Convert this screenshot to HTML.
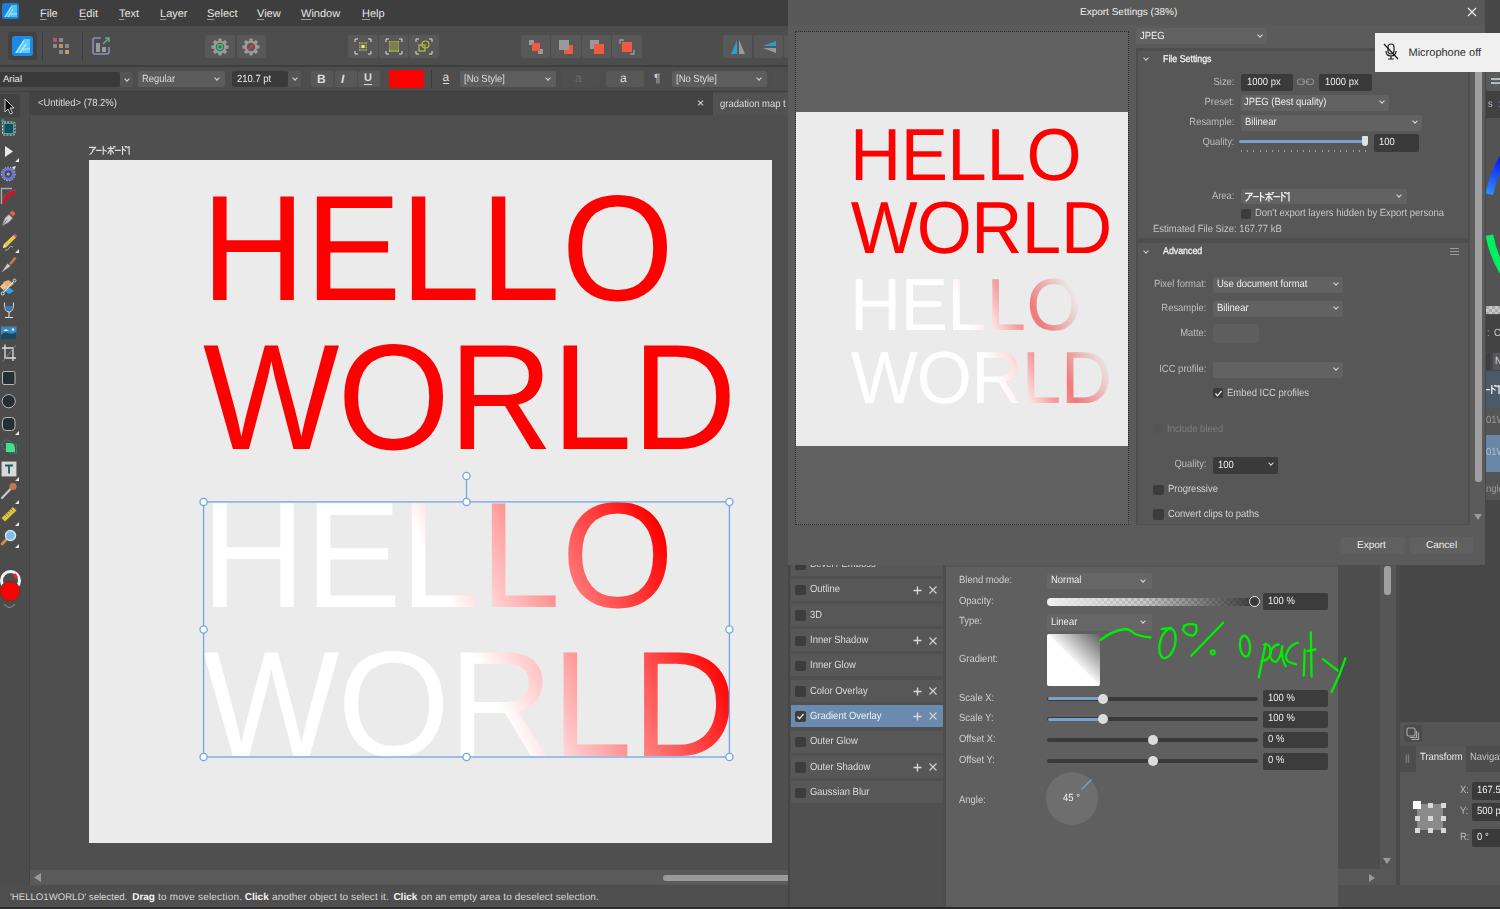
<!DOCTYPE html>
<html><head><meta charset="utf-8">
<style>
*{box-sizing:border-box;margin:0;padding:0}
html,body{width:1500px;height:909px;overflow:hidden;background:#4b4b4b;font-family:"Liberation Sans",sans-serif;color:#e6e6e6;text-rendering:geometricPrecision}
.a{position:absolute}
.t{position:absolute;white-space:nowrap;font-size:10.4px;line-height:10px;color:#e8e8e8;transform:scaleX(0.91);transform-origin:0 50%}
.lb{position:absolute;white-space:nowrap;font-size:10.4px;line-height:10px;color:#bdbdbd;text-align:right;transform:scaleX(0.91);transform-origin:100% 50%}
.m{position:absolute;white-space:nowrap;font-size:11px;line-height:12px;color:#e6e6e6;top:8px}
.m u{text-decoration:underline;text-decoration-color:#9a9a9a;text-underline-offset:1.5px;text-decoration-thickness:1px}
.btn{position:absolute;background:#585858;border-radius:2px}
.fld{position:absolute;background:#3a3a3a;border-radius:2px}
.dd{position:absolute;background:#626262;border-radius:2px}
.chev{position:absolute;width:4px;height:4px;border-right:1px solid #d8d8d8;border-bottom:1px solid #d8d8d8;transform:translate(1px,1px) rotate(45deg)}
.cb{position:absolute;width:11px;height:11px;background:#3c3c3c;border-radius:2px}
.row{position:absolute;left:791px;width:152px;height:22px;background:#575757}
.row .cb{left:4px;top:5px}
.row .t{left:18px;top:6px;color:#dcdcdc}
.pl{position:absolute;left:122px;top:4px;font-size:13px;line-height:13px;color:#d8d8d8}
.xx{position:absolute;left:137px;top:4px;font-size:12px;line-height:13px;color:#d0d0d0}
.tool{position:absolute;left:2px;width:16px;height:16px}
</style></head><body>
<!-- ===== menu bar ===== -->
<div class="a" style="left:0;top:0;width:788px;height:26px;background:#3e3e3e"></div>
<svg class="a" style="left:2px;top:3px" width="18" height="17" viewBox="0 0 18 17">
<rect x="0" y="0" width="17" height="16" rx="3" fill="#1c7fd6"/>
<path d="M2 14 L9.5 2 L15 2 L15 14 Z" fill="#4fc3f7"/>
<path d="M3 14 L9.5 3.5 M6 14 L11 6 M9 11 L15 11" stroke="#bfe9ff" stroke-width="1" fill="none"/>
</svg>
<div class="m" style="left:40px"><u>F</u>ile</div>
<div class="m" style="left:79px"><u>E</u>dit</div>
<div class="m" style="left:119px"><u>T</u>ext</div>
<div class="m" style="left:160px"><u>L</u>ayer</div>
<div class="m" style="left:207px"><u>S</u>elect</div>
<div class="m" style="left:257px"><u>V</u>iew</div>
<div class="m" style="left:301px"><u>W</u>indow</div>
<div class="m" style="left:362px"><u>H</u>elp</div>

<!-- ===== toolbar ===== -->
<div class="a" style="left:0;top:26px;width:788px;height:40px;background:#4d4d4d"></div>
<div class="a" style="left:0;top:65px;width:788px;height:2px;background:#3f3f3f"></div>
<div class="a" style="left:8px;top:32px;width:29px;height:28px;background:#424242;border-radius:3px"></div>
<svg class="a" style="left:12px;top:36px" width="22" height="21" viewBox="0 0 22 21">
<rect x="0" y="0" width="21" height="20" rx="3" fill="#1e88e5"/>
<path d="M3 17 L12 3 L18 3 L18 17 Z" fill="#5ccbf9"/>
<path d="M4 17 L12 4.5 M8 17 L14 8 M11 13 L18 13" stroke="#c8f0ff" stroke-width="1.2" fill="none"/>
</svg>
<div class="a" style="left:42px;top:32px;width:1px;height:29px;background:#3e3e3e"></div>
<div class="a" style="left:82px;top:32px;width:1px;height:29px;background:#3e3e3e"></div>
<svg class="a" style="left:52px;top:36px" width="20" height="20" viewBox="0 0 20 20">
<rect x="1" y="2" width="4" height="4" fill="#a0606a"/><rect x="7" y="2" width="4" height="4" fill="#8a8a8a"/>
<rect x="1" y="8" width="4" height="4" fill="#8a8a8a"/><rect x="7" y="8" width="4" height="4" fill="#c09060"/><rect x="13" y="8" width="4" height="4" fill="#8a8a8a"/>
<rect x="7" y="14" width="4" height="4" fill="#8a8a8a"/><rect x="13" y="14" width="4" height="4" fill="#c0a060"/>
</svg>
<svg class="a" style="left:92px;top:36px" width="20" height="20" viewBox="0 0 20 20">
<path d="M9 2 H3 Q1 2 1 4 V16 Q1 18 3 18 H15 Q17 18 17 16 V11" stroke="#8c8cc8" stroke-width="1.6" fill="none"/>
<rect x="4" y="7" width="4" height="9" fill="#9a9a9a"/><rect x="10" y="11" width="4" height="5" fill="#9a9a9a"/>
<path d="M11 8 L17 2 M13 2 H17 V6" stroke="#5aaa8a" stroke-width="1.6" fill="none"/>
</svg>
<!-- gear buttons -->
<div class="btn" style="left:205px;top:35px;width:30px;height:23px"></div>
<div class="btn" style="left:237px;top:35px;width:29px;height:23px"></div>
<svg class="a" style="left:211px;top:38px" width="18" height="18" viewBox="0 0 18 18">
<g fill="#9c9c9c"><circle cx="9" cy="9" r="6.3"/><rect x="7.3" y="0.5" width="3.4" height="17" rx="1"/><rect x="0.5" y="7.3" width="17" height="3.4" rx="1"/><rect x="7.3" y="0.5" width="3.4" height="17" rx="1" transform="rotate(45 9 9)"/><rect x="7.3" y="0.5" width="3.4" height="17" rx="1" transform="rotate(-45 9 9)"/></g>
<circle cx="9" cy="9" r="4.2" fill="#585858"/><circle cx="9" cy="9" r="3.2" fill="#2ec27e"/><circle cx="9" cy="9" r="1.4" fill="#585858"/>
</svg>
<svg class="a" style="left:242px;top:38px" width="18" height="18" viewBox="0 0 18 18">
<g fill="#9c9c9c"><circle cx="9" cy="9" r="6.3"/><rect x="7.3" y="0.5" width="3.4" height="17" rx="1"/><rect x="0.5" y="7.3" width="17" height="3.4" rx="1"/><rect x="7.3" y="0.5" width="3.4" height="17" rx="1" transform="rotate(45 9 9)"/><rect x="7.3" y="0.5" width="3.4" height="17" rx="1" transform="rotate(-45 9 9)"/></g>
<circle cx="9" cy="9" r="4.2" fill="#585858"/><path d="M6.5 11.5 L11.5 6.5" stroke="#e0304a" stroke-width="1.8"/>
</svg>
<!-- grid buttons -->
<div class="btn" style="left:348px;top:35px;width:30px;height:23px"></div>
<div class="btn" style="left:379px;top:35px;width:29px;height:23px"></div>
<div class="btn" style="left:409px;top:35px;width:30px;height:23px"></div>
<svg class="a" style="left:354px;top:38px" width="18" height="17" viewBox="0 0 18 17">
<path d="M1 4 V1 H4 M14 1 H17 V4 M17 13 V16 H14 M4 16 H1 V13" stroke="#ddd" stroke-width="1" fill="none"/>
<g fill="#9a9a6a"><rect x="5" y="4" width="8" height="9"/></g>
<g stroke="#5a5a5a" stroke-width="0.8"><path d="M7 4V13M9 4V13M11 4V13M5 6.5H13M5 8.5H13M5 10.5H13"/></g>
<rect x="7.5" y="7" width="3" height="3" fill="#e6f05a"/>
</svg>
<svg class="a" style="left:385px;top:38px" width="18" height="17" viewBox="0 0 18 17">
<path d="M1 4 V1 H4 M14 1 H17 V4 M17 13 V16 H14 M4 16 H1 V13" stroke="#ddd" stroke-width="1" fill="none"/>
<rect x="4" y="3" width="10" height="11" fill="#b5c040"/>
<g stroke="#5a5a5a" stroke-width="0.8"><path d="M6 3V14M8 3V14M10 3V14M12 3V14M4 5H14M4 7H14M4 9H14M4 11H14"/></g>
</svg>
<svg class="a" style="left:415px;top:38px" width="18" height="17" viewBox="0 0 18 17">
<path d="M1 4 V1 H4 M14 1 H17 V4 M17 13 V16 H14 M4 16 H1 V13" stroke="#ddd" stroke-width="1" fill="none"/>
<rect x="4" y="7" width="6" height="6" fill="none" stroke="#b5c040" stroke-width="1.2"/><circle cx="10.5" cy="6.5" r="3.5" fill="none" stroke="#b5c040" stroke-width="1.2"/>
</svg>
<!-- arrange buttons -->
<div class="btn" style="left:521px;top:35px;width:29px;height:23px"></div>
<div class="btn" style="left:551px;top:35px;width:30px;height:23px"></div>
<div class="btn" style="left:582px;top:35px;width:29px;height:23px"></div>
<div class="btn" style="left:612px;top:35px;width:30px;height:23px"></div>
<svg class="a" style="left:527px;top:38px" width="18" height="18" viewBox="0 0 18 18">
<rect x="2" y="2" width="5" height="5" fill="#9a9a9a"/><rect x="11" y="11" width="5" height="5" fill="#9a9a9a"/><rect x="5" y="5" width="8" height="8" fill="#f05a40"/>
</svg>
<svg class="a" style="left:557px;top:38px" width="18" height="18" viewBox="0 0 18 18">
<rect x="2" y="2" width="10" height="10" fill="#9a9a9a"/><path d="M12 7 H16 V16 H7 V12 H12 Z" fill="#f05a40"/>
</svg>
<svg class="a" style="left:588px;top:38px" width="18" height="18" viewBox="0 0 18 18">
<path d="M2 2 H11 V6 H6 V11 H2 Z" fill="#9a9a9a"/><rect x="6" y="6" width="10" height="10" fill="#f05a40"/>
</svg>
<svg class="a" style="left:618px;top:38px" width="18" height="18" viewBox="0 0 18 18">
<path d="M2 6 V2 H6 M12 16 H16 V12" stroke="#9a9a9a" stroke-width="1.4" fill="none"/><rect x="4" y="4" width="10" height="10" fill="#f05a40"/>
</svg>
<!-- flip buttons -->
<div class="btn" style="left:723px;top:35px;width:29px;height:23px"></div>
<div class="btn" style="left:754px;top:35px;width:29px;height:23px"></div>
<div class="btn" style="left:784px;top:35px;width:4px;height:23px"></div>
<svg class="a" style="left:729px;top:38px" width="18" height="18" viewBox="0 0 18 18">
<path d="M8 2 L8 16 L2 16 Z" fill="#2a9fd6"/><path d="M10 2 L10 16 L16 16 Z" fill="#9a9a9a"/>
</svg>
<svg class="a" style="left:760px;top:38px" width="18" height="18" viewBox="0 0 18 18">
<path d="M16 3 L16 8 L3 8 Z" fill="#2a9fd6"/><path d="M16 10 L16 15 L3 10 Z" fill="#9a9a9a"/>
</svg>

<!-- ===== context bar ===== -->
<div class="a" style="left:0;top:67px;width:788px;height:24px;background:#4d4d4d"></div>
<div class="a" style="left:0;top:91px;width:788px;height:1px;background:#3f3f3f"></div>
<div class="fld" style="left:0;top:72px;width:120px;height:15px;border-radius:0 2px 2px 0"></div>
<div class="btn" style="left:120px;top:72px;width:13px;height:15px;background:#555"></div>
<div class="chev" style="left:124px;top:76px"></div>
<div class="t" style="left:3px;top:75px;font-size:9.5px;color:#eee;transform:none">Arial</div>
<div class="dd" style="left:138px;top:71px;width:87px;height:16px;background:#5c5c5c"></div>
<div class="t" style="left:142px;top:74.5px;color:#ddd">Regular</div>
<div class="chev" style="left:214px;top:75px"></div>
<div class="fld" style="left:232px;top:71px;width:56px;height:16px"></div>
<div class="btn" style="left:288px;top:71px;width:13px;height:16px;background:#555"></div>
<div class="chev" style="left:292px;top:75px"></div>
<div class="t" style="left:237px;top:74.5px;color:#eee">210.7 pt</div>
<div class="btn" style="left:311px;top:71px;width:22px;height:16px"></div>
<div class="btn" style="left:335px;top:71px;width:22px;height:16px"></div>
<div class="btn" style="left:358px;top:71px;width:22px;height:16px"></div>
<div class="t" style="left:317px;top:73px;font-size:12px;line-height:12px;font-weight:bold;color:#ddd;transform:none">B</div>
<div class="t" style="left:341px;top:73px;font-size:12px;line-height:12px;font-style:italic;font-weight:bold;color:#ddd;transform:none">I</div>
<div class="t" style="left:364px;top:72px;font-size:11px;line-height:12px;font-weight:bold;color:#ddd;border-bottom:1px solid #ddd;transform:none">U</div>
<div class="a" style="left:389px;top:70px;width:35px;height:18px;background:#ff0000;border-radius:2px"></div>
<div class="a" style="left:431px;top:70px;width:1px;height:18px;background:#3a3a3a"></div>
<div class="t" style="left:442.5px;top:71px;font-size:12px;line-height:12px;color:#ddd;border-bottom:1px solid #ddd;transform:none">a</div>
<div class="dd" style="left:460px;top:71px;width:96px;height:16px;background:#5d5d5d"></div>
<div class="t" style="left:464px;top:74.5px;color:#ddd">[No Style]</div>
<div class="chev" style="left:545px;top:75px"></div>
<div class="btn" style="left:562px;top:71px;width:38px;height:16px;background:#4f4f4f"></div>
<div class="t" style="left:575px;top:72px;font-size:12px;line-height:12px;color:#6a6a6a;transform:none">a</div>
<div class="btn" style="left:606px;top:71px;width:38px;height:16px"></div>
<div class="t" style="left:620px;top:71.5px;font-size:12px;line-height:12px;color:#ddd;transform:none">a</div>
<div class="t" style="left:654px;top:72px;font-size:12px;line-height:12px;color:#ccc;transform:none">&#182;</div>
<div class="dd" style="left:672px;top:71px;width:95px;height:16px;background:#5d5d5d"></div>
<div class="t" style="left:676px;top:74.5px;color:#ddd">[No Style]</div>
<div class="chev" style="left:756px;top:75px"></div>
<div class="btn" style="left:773px;top:71px;width:15px;height:16px;background:#4f4f4f"></div>

<!-- ===== left tools ===== -->
<div class="a" style="left:0;top:92px;width:29px;height:793px;background:#4c4c4c"></div>
<div class="a" style="left:29px;top:92px;width:1px;height:793px;background:#444"></div>
<div class="a" style="left:0;top:94px;width:20px;height:23px;background:#434343;border-radius:0 3px 3px 0"></div>
<svg class="a" style="left:0;top:92px" width="29" height="530" viewBox="0 92 29 530">
<!-- 1 move -->
<path d="M5 99 L5 112 L8 109 L10.5 114 L12.5 113 L10 108 L14 108 Z" fill="#111" stroke="#ddd" stroke-width="0.9" stroke-linejoin="round"/>
<!-- 2 artboard -->
<rect x="2.5" y="122" width="12.5" height="13" rx="1.5" fill="none" stroke="#ddd" stroke-width="1" stroke-dasharray="2 1.2"/>
<rect x="4" y="123.5" width="9.5" height="10" fill="#1d4a58" stroke="#2fb5a5" stroke-width="1"/>
<path d="M1 121 H4.5 M2.8 119.3 V122.7" stroke="#2fb5a5" stroke-width="1.2"/>
<!-- 3 node -->
<path d="M5 146 L5 157 L13 151.5 Z" fill="#e8e8e8"/>
<path d="M15 162 L19 158 V162 Z" fill="#e8e8e8"/>
<!-- 4 point transform -->
<circle cx="8.3" cy="174" r="6.8" fill="none" stroke="#ddd" stroke-width="0.9" stroke-dasharray="1.6 1.2"/>
<circle cx="8.3" cy="174" r="5" fill="none" stroke="#6a78f0" stroke-width="2.6"/>
<circle cx="8.3" cy="174" r="1.6" fill="#aaa"/>
<path d="M12 167 L16 166 L14.5 170 Z" fill="#ddd"/>
<!-- 5 corner -->
<path d="M1.5 204 V188.5 H12" fill="none" stroke="#aaa" stroke-width="1.4"/>
<path d="M2 204 Q2 191 16 190 V194 Q6 195 5.5 204 Z" fill="#707070"/>
<path d="M2 204 Q3 191 16 190.5 V194.5 Q7 195.5 5.5 204 Z" fill="#b52030"/>
<!-- 6 pen -->
<path d="M2 226 L5 218 L9 214.5 L12.5 218 L9 222 Z" fill="#d0d0d0" stroke="#888" stroke-width="0.6"/>
<path d="M2 226 L7 219.5" stroke="#555" stroke-width="0.8"/>
<path d="M9.5 213 L12.5 210.5 L15.5 213.5 L13 216.5 Z" fill="#f05a3a"/>
<!-- 7 pencil -->
<path d="M3 248 L4 244 L13.5 235 L16 237.5 L6.5 247 Z" fill="#e6c84a"/>
<path d="M3 248 L4 244 L6.5 247 Z" fill="#f0e0b0"/>
<path d="M13.5 235 L15 233.7 L17.3 236 L16 237.5 Z" fill="#e040c0"/>
<path d="M5 250 Q8 251 9 248 Q10 245 13 247" fill="none" stroke="#ccc" stroke-width="0.7"/>
<path d="M15 253 L19 249 V253 Z" fill="#e8e8e8"/>
<!-- 8 vector brush -->
<path d="M9 263.5 L14 257.5 Q16 256.5 16.5 258.5 L11 265 Z" fill="#c87848"/>
<path d="M1.5 272.5 L7.5 263.5 L10.5 266 Z" fill="#c8c8c8"/>
<!-- 9 fill -->
<rect x="2.5" y="281" width="6" height="6.5" fill="#f0c080" transform="rotate(-45 8 287)"/>
<path d="M3 282 L8.5 280 L14 284 L8 288 Z" fill="#e8b070"/>
<path d="M3 290 L8.5 287 L14 291 L9 294 Z" fill="#3aa0e0"/>
<path d="M2.5 293.5 L14.5 280.5" stroke="#e8e8e8" stroke-width="1.1"/>
<circle cx="2.7" cy="293.5" r="1.5" fill="#555" stroke="#eee" stroke-width="0.8"/>
<circle cx="14.5" cy="280.5" r="1.5" fill="#555" stroke="#eee" stroke-width="0.8"/>
<!-- 10 transparency -->
<path d="M4.5 302.5 Q4 312 9 312 Q14 312 13.5 302.5" fill="none" stroke="#ddd" stroke-width="1"/>
<path d="M5 306 Q5.5 311 9 311 Q12.5 311 13 306 Z" fill="#3a7ab8"/>
<path d="M9 312 V317 M5 317.5 H13" stroke="#ddd" stroke-width="1.1"/>
<!-- 11 place image -->
<rect x="1" y="326.5" width="15.5" height="12.5" fill="#3a88b8"/>
<path d="M1 335 Q5 331 8 333 Q12 335 16.5 332 V339 H1 Z" fill="#174868"/>
<path d="M3 331 L6 329 L9 331 Z" fill="#dfeef8"/>
<circle cx="13" cy="329.5" r="1.2" fill="#dfeef8"/>
<!-- 12 crop -->
<path d="M5 344.5 V358 H16 M2 348 H13 V361" fill="none" stroke="#ddd" stroke-width="1.3"/>
<path d="M2.5 362 L16 345" stroke="#888" stroke-width="0.8"/>
<!-- 13 rect -->
<rect x="2.5" y="371.5" width="12.5" height="13" rx="1.5" fill="#263034" stroke="#b8b8b8" stroke-width="1"/>
<!-- 14 ellipse -->
<circle cx="8.7" cy="401.2" r="6.6" fill="#263034" stroke="#b8b8b8" stroke-width="1"/>
<!-- 15 rounded rect -->
<rect x="2.5" y="417.5" width="12.5" height="13" rx="3.5" fill="#263034" stroke="#b8b8b8" stroke-width="1"/>
<path d="M15 435 L19 431 V435 Z" fill="#e8e8e8"/>
<!-- 16 shape -->
<circle cx="7" cy="445" r="5" fill="none" stroke="#2f9aa8" stroke-width="1" stroke-dasharray="1.2 1"/>
<rect x="9" y="444" width="7.5" height="9" fill="none" stroke="#2f9aa8" stroke-width="1" stroke-dasharray="1.2 1"/>
<path d="M6 443 H10 Q15 443 15 449 V452 H6 Z" fill="#44e088"/>
<!-- 17 text -->
<rect x="1.5" y="461.5" width="15" height="15" rx="1" fill="#d8d8d8" stroke="#888" stroke-width="1"/>
<path d="M5 465.5 H13 M9 465.5 V473.5" stroke="#1f5868" stroke-width="1.8"/>
<path d="M15 481 L19 477 V481 Z" fill="#e8e8e8"/>
<!-- 18 color picker -->
<path d="M2 498 L10 489.5" stroke="#c8c8c8" stroke-width="2.2" stroke-linecap="round"/>
<circle cx="13" cy="486.5" r="3.6" fill="#c87850"/>
<path d="M15 504 L19 500 V504 Z" fill="#e8e8e8"/>
<!-- 19 ruler -->
<path d="M1.5 518 L13 507 L16.5 510.5 L5 521.5 Z" fill="#e0c040"/>
<path d="M5 515 l1.3 1.3 M7 513 l1.8 1.8 M9 511 l1.3 1.3 M11 509 l1.8 1.8" stroke="#6a5a20" stroke-width="0.7"/>
<path d="M15 526 L19 522 V526 Z" fill="#e8e8e8"/>
<!-- 20 zoom -->
<path d="M2 544 L6.5 539.5" stroke="#d89050" stroke-width="2.6" stroke-linecap="round"/>
<circle cx="10.5" cy="535.5" r="5" fill="#78c0f0" stroke="#e0e0e0" stroke-width="1.5"/>
<path d="M15 548 L19 544 V548 Z" fill="#e8e8e8"/>
<!-- 21 colour -->
<circle cx="10.5" cy="580.5" r="9" fill="none" stroke="#f2f2f2" stroke-width="3"/>
<path d="M14.2 574 L16.6 577.8" stroke="#ff2020" stroke-width="3.2"/>
<circle cx="10" cy="591.3" r="10" fill="#ff0000" stroke="#444" stroke-width="1"/>
<path d="M5 605 Q9.5 610 14 605 M4 605.5 L5.5 604 M15 605.5 L13.5 604" fill="none" stroke="#999" stroke-width="0.9"/>
</svg>


<!-- ===== tab bar + canvas ===== -->
<div class="a" style="left:30px;top:92px;width:683px;height:24px;background:#434343"></div>
<div class="t" style="left:38px;top:99px;color:#ddd">&lt;Untitled&gt; (78.2%)</div>
<div class="t" style="left:697px;top:97px;font-size:12px;line-height:12px;color:#ddd;transform:none">&#215;</div>
<div class="a" style="left:713px;top:93px;width:75px;height:22px;background:#525252"></div>
<div class="t" style="left:720px;top:99.5px;color:#ddd">gradation map t</div>
<div class="a" style="left:30px;top:115px;width:758px;height:755px;background:#4f4f4f"></div>
<div class="a" style="left:30px;top:870px;width:758px;height:15px;background:#5a5a5a"></div>
<svg class="a" style="left:34px;top:873px" width="8" height="9"><path d="M7 0 L0 4.5 L7 9 Z" fill="#9a9a9a"/></svg>
<div class="a" style="left:663px;top:875px;width:125px;height:6px;background:#9a9a9a;border-radius:3px 0 0 3px"></div>
<!-- status -->
<div class="a" style="left:0;top:885px;width:1500px;height:22px;background:#4e4e4e"></div>
<div class="a" style="left:0;top:907px;width:1500px;height:2px;background:#2c2c2c"></div>
<div class="t" style="left:10px;top:893px;font-size:9.6px;color:#d8d8d8;transform:none">'HELLO1WORLD' selected.</div>
<div class="t" style="left:132.2px;top:893px;font-size:10px;color:#f4f4f4;font-weight:bold;transform:none">Drag</div>
<div class="t" style="left:158px;top:893px;font-size:10px;color:#d8d8d8;letter-spacing:0.2px;transform:none">to move selection.</div>
<div class="t" style="left:244.8px;top:893px;font-size:10px;color:#f4f4f4;font-weight:bold;transform:none">Click</div>
<div class="t" style="left:272px;top:893px;font-size:10px;color:#d8d8d8;letter-spacing:0.1px;transform:none">another object to select it.</div>
<div class="t" style="left:393.4px;top:893px;font-size:10px;color:#f4f4f4;font-weight:bold;transform:none">Click</div>
<div class="t" style="left:421px;top:893px;font-size:10px;color:#d8d8d8;letter-spacing:0.1px;transform:none">on an empty area to deselect selection.</div>

<!-- artboard -->
<svg width="0" height="0" style="position:absolute"><defs><symbol id="kata" viewBox="0 0 45 9.5" overflow="visible"><g fill="none" stroke="currentColor" stroke-width="1.25" stroke-linecap="round">
<path d="M0.3 1.3 H7.2 Q6.6 3.4 4.6 4.3 M4.6 3 Q4.4 6.8 1 9"/>
<path d="M8.2 4.6 H13.4"/>
<path d="M15.6 0 V9.2 M16 3.8 L19 5.6"/>
<path d="M20.6 2.4 H27.2 M23.9 0 V9.2 M22.8 4.6 L20.8 8 M25 4.6 L27 7.6 M27 0 l0.5 1 M28.2 -0.2 l0.5 1"/>
<path d="M28.8 4.6 H34.6"/>
<path d="M36.8 0 V9.2 M37.2 3 L40.2 5 M39.6 0.2 l0.5 1 M40.8 0 l0.5 1"/>
<path d="M42.3 1.8 L44 0.5 V9"/>
</g></symbol></defs></svg>
<svg class="a" style="left:89px;top:146px;color:#dedede" width="41" height="9" viewBox="0 0 45 9.5"><use href="#kata"/></svg>
<div class="a" style="left:89px;top:160px;width:683px;height:683px;background:#ebebeb"></div>
<svg class="a" style="left:0;top:0" width="788" height="909" viewBox="0 0 788 909">
<defs><linearGradient id="g1" gradientUnits="userSpaceOnUse" x1="462.9" y1="629.5" x2="661.8" y2="532.8"><stop offset="0" stop-color="#fff"/><stop offset="1" stop-color="#f00"/></linearGradient>
<mask id="m1" maskUnits="userSpaceOnUse" x="0" y="0" width="788" height="909"><g font-family="Liberation Sans" font-size="144.5" fill="#fff">
<text transform="translate(0,606.6) scale(1,1.0412)" x="201.25 305.05 399.95 479.95 561.56" y="0">HELLO</text>
<text transform="translate(0,755.7) scale(1,1.0412)" x="202.96 337.46 448.65 551.75 632.15" y="0">WORLD</text>
</g></mask></defs>
<g font-family="Liberation Sans" font-size="144.5">
<text transform="translate(0,300) scale(1,1.0412)" x="201.25 305.05 399.95 479.95 561.56" y="0" fill="#f00">HELLO</text>
<text transform="translate(0,448.6) scale(1,1.0412)" x="202.96 337.46 448.65 551.75 632.15" y="0" fill="#f00">WORLD</text>
</g>
<rect x="180" y="480" width="580" height="300" fill="url(#g1)" mask="url(#m1)"/>
<g stroke="#70a6e8" stroke-width="1.3" fill="none">
<rect x="203.6" y="501.9" width="525.8" height="255.1"/>
<line x1="466.5" y1="476" x2="466.5" y2="501.9"/>
</g>
<g stroke="#70a6e8" stroke-width="1.3" fill="#fff">
<circle cx="203.6" cy="501.9" r="3.6"/><circle cx="466.5" cy="501.9" r="3.6"/><circle cx="729.4" cy="501.9" r="3.6"/>
<circle cx="203.6" cy="629.5" r="3.6"/><circle cx="729.4" cy="629.5" r="3.6"/>
<circle cx="203.6" cy="757" r="3.6"/><circle cx="466.5" cy="757" r="3.6"/><circle cx="729.4" cy="757" r="3.6"/>
<circle cx="466.5" cy="476" r="3.6"/>
</g>
</svg>

<!-- ===== EFFECTS ===== -->
<div class="a" style="left:788px;top:565px;width:712px;height:342px;background:#505050"></div>
<div class="a" style="left:788px;top:565px;width:1.5px;height:342px;background:#464646"></div>
<div class="row" style="top:553.5px;background:#575757">
<div class="cb" style="top:6.3px;width:10.5px;height:10.5px"></div>
<div class="t" style="left:18.5px;top:6.8px;color:#dcdcdc">Bevel / Emboss</div>


</div>
<div class="row" style="top:578.6px;background:#575757">
<div class="cb" style="top:6.3px;width:10.5px;height:10.5px"></div>
<div class="t" style="left:18.5px;top:6.8px;color:#dcdcdc">Outline</div>
<svg class="a" style="left:121.5px;top:7px" width="9" height="9"><path d="M4.5 0.5V8.5M0.5 4.5H8.5" stroke="#d8d8d8" stroke-width="1.4"/></svg>
<svg class="a" style="left:137.5px;top:7.3px" width="8" height="8"><path d="M0.5 0.5L7.5 7.5M7.5 0.5L0.5 7.5" stroke="#d0d0d0" stroke-width="1.2"/></svg>
</div>
<div class="row" style="top:603.9px;background:#575757">
<div class="cb" style="top:6.3px;width:10.5px;height:10.5px"></div>
<div class="t" style="left:18.5px;top:6.8px;color:#dcdcdc">3D</div>
</div>
<div class="row" style="top:629.3px;background:#575757">
<div class="cb" style="top:6.3px;width:10.5px;height:10.5px"></div>
<div class="t" style="left:18.5px;top:6.8px;color:#dcdcdc">Inner Shadow</div>
<svg class="a" style="left:121.5px;top:7px" width="9" height="9"><path d="M4.5 0.5V8.5M0.5 4.5H8.5" stroke="#d8d8d8" stroke-width="1.4"/></svg>
<svg class="a" style="left:137.5px;top:7.3px" width="8" height="8"><path d="M0.5 0.5L7.5 7.5M7.5 0.5L0.5 7.5" stroke="#d0d0d0" stroke-width="1.2"/></svg>
</div>
<div class="row" style="top:654.4px;background:#575757">
<div class="cb" style="top:6.3px;width:10.5px;height:10.5px"></div>
<div class="t" style="left:18.5px;top:6.8px;color:#dcdcdc">Inner Glow</div>
</div>
<div class="row" style="top:679.8px;background:#575757">
<div class="cb" style="top:6.3px;width:10.5px;height:10.5px"></div>
<div class="t" style="left:18.5px;top:6.8px;color:#dcdcdc">Color Overlay</div>
<svg class="a" style="left:121.5px;top:7px" width="9" height="9"><path d="M4.5 0.5V8.5M0.5 4.5H8.5" stroke="#d8d8d8" stroke-width="1.4"/></svg>
<svg class="a" style="left:137.5px;top:7.3px" width="8" height="8"><path d="M0.5 0.5L7.5 7.5M7.5 0.5L0.5 7.5" stroke="#d0d0d0" stroke-width="1.2"/></svg>
</div>
<div class="row" style="top:705.2px;background:#6a8bad">
<div class="cb" style="top:6.3px;width:10.5px;height:10.5px"></div>
<svg class="a" style="left:5px;top:6.5px" width="9" height="9"><path d="M1.5 4.5 L3.5 6.8 L7.5 2" stroke="#eee" stroke-width="1.3" fill="none"/></svg>
<div class="t" style="left:18.5px;top:6.8px;color:#eef2f6">Gradient Overlay</div>
<svg class="a" style="left:121.5px;top:7px" width="9" height="9"><path d="M4.5 0.5V8.5M0.5 4.5H8.5" stroke="#d8d8d8" stroke-width="1.4"/></svg>
<svg class="a" style="left:137.5px;top:7.3px" width="8" height="8"><path d="M0.5 0.5L7.5 7.5M7.5 0.5L0.5 7.5" stroke="#d0d0d0" stroke-width="1.2"/></svg>
</div>
<div class="row" style="top:730.6px;background:#575757">
<div class="cb" style="top:6.3px;width:10.5px;height:10.5px"></div>
<div class="t" style="left:18.5px;top:6.8px;color:#dcdcdc">Outer Glow</div>
</div>
<div class="row" style="top:756px;background:#575757">
<div class="cb" style="top:6.3px;width:10.5px;height:10.5px"></div>
<div class="t" style="left:18.5px;top:6.8px;color:#dcdcdc">Outer Shadow</div>
<svg class="a" style="left:121.5px;top:7px" width="9" height="9"><path d="M4.5 0.5V8.5M0.5 4.5H8.5" stroke="#d8d8d8" stroke-width="1.4"/></svg>
<svg class="a" style="left:137.5px;top:7.3px" width="8" height="8"><path d="M0.5 0.5L7.5 7.5M7.5 0.5L0.5 7.5" stroke="#d0d0d0" stroke-width="1.2"/></svg>
</div>
<div class="row" style="top:781.4px;background:#575757">
<div class="cb" style="top:6.3px;width:10.5px;height:10.5px"></div>
<div class="t" style="left:18.5px;top:6.8px;color:#dcdcdc">Gaussian Blur</div>
</div>
<div class="a" style="left:943px;top:565px;width:3px;height:342px;background:#4d4d4d"></div>
<div class="a" style="left:946px;top:565px;width:392px;height:342px;background:#5f5f5f"></div>
<div class="a" style="left:946px;top:565px;width:392px;height:2px;background:#555"></div>
<div class="t" style="left:959px;top:576px;color:#cfcfcf">Blend mode:</div>
<div class="t" style="left:959px;top:596.5px;color:#cfcfcf">Opacity:</div>
<div class="t" style="left:959px;top:617px;color:#cfcfcf">Type:</div>
<div class="t" style="left:959px;top:654.5px;color:#cfcfcf">Gradient:</div>
<div class="t" style="left:959px;top:693.5px;color:#cfcfcf">Scale X:</div>
<div class="t" style="left:959px;top:714.4px;color:#cfcfcf">Scale Y:</div>
<div class="t" style="left:959px;top:735px;color:#cfcfcf">Offset X:</div>
<div class="t" style="left:959px;top:756.3px;color:#cfcfcf">Offset Y:</div>
<div class="t" style="left:959px;top:795.5px;color:#cfcfcf">Angle:</div>
<div class="dd" style="left:1047px;top:573px;width:105px;height:16px;background:#666"></div>
<div class="t" style="left:1051px;top:576px;color:#eee">Normal</div>
<div class="chev" style="left:1140px;top:576.5px"></div>
<div class="a" style="left:1047px;top:597.5px;width:212px;height:8.5px;border-radius:4px;background:linear-gradient(90deg,rgba(240,240,240,1) 0%,rgba(200,200,200,0.6) 45%,rgba(40,40,40,0.9) 100%),repeating-conic-gradient(#cfcfcf 0 25%,#8a8a8a 0 50%) 0 0/6px 6px"></div>
<div class="a" style="left:1248.5px;top:596px;width:11px;height:11px;border-radius:50%;background:#3a3a3a;border:1.5px solid #e8e8e8"></div>
<div class="fld" style="left:1262.5px;top:593px;width:65.5px;height:16.5px;background:#3c3c3c"></div>
<div class="t" style="left:1268px;top:596.5px;color:#eee">100 %</div>
<div class="dd" style="left:1047px;top:614px;width:105px;height:16.5px;background:#666"></div>
<div class="t" style="left:1051px;top:617.5px;color:#eee">Linear</div>
<div class="chev" style="left:1140px;top:617.5px"></div>
<div class="a" style="left:1047px;top:634px;width:52.5px;height:51.5px;border-radius:2px;background:linear-gradient(45deg,#fff 50%,#f0f0f0 52%,#606060 100%)"></div>
<div class="a" style="left:1047px;top:696.5px;width:211px;height:4px;background:#3a3a3a;border-radius:2px"></div>
<div class="a" style="left:1048px;top:697.0px;width:54px;height:3px;background:#7aa0cc;border-radius:2px"></div>
<div class="a" style="left:1097.5px;top:693.5px;width:10px;height:10px;background:#dcdcdc;border-radius:50%"></div>
<div class="a" style="left:1047px;top:717.4px;width:211px;height:4px;background:#3a3a3a;border-radius:2px"></div>
<div class="a" style="left:1048px;top:717.9px;width:54px;height:3px;background:#7aa0cc;border-radius:2px"></div>
<div class="a" style="left:1097.5px;top:714.4px;width:10px;height:10px;background:#dcdcdc;border-radius:50%"></div>
<div class="a" style="left:1047px;top:738px;width:211px;height:4px;background:#3a3a3a;border-radius:2px"></div>
<div class="a" style="left:1147.5px;top:735px;width:10px;height:10px;background:#dcdcdc;border-radius:50%"></div>
<div class="a" style="left:1047px;top:759.3px;width:211px;height:4px;background:#3a3a3a;border-radius:2px"></div>
<div class="a" style="left:1147.5px;top:756.3px;width:10px;height:10px;background:#dcdcdc;border-radius:50%"></div>
<div class="fld" style="left:1262.5px;top:690.2px;width:65.5px;height:16.5px;background:#3c3c3c"></div>
<div class="t" style="left:1268px;top:693.5px;color:#eee">100 %</div>
<div class="fld" style="left:1262.5px;top:711.1px;width:65.5px;height:16.5px;background:#3c3c3c"></div>
<div class="t" style="left:1268px;top:714.4px;color:#eee">100 %</div>
<div class="fld" style="left:1262.5px;top:731.7px;width:65.5px;height:16.5px;background:#3c3c3c"></div>
<div class="t" style="left:1268px;top:735px;color:#eee">0 %</div>
<div class="fld" style="left:1262.5px;top:753.0px;width:65.5px;height:16.5px;background:#3c3c3c"></div>
<div class="t" style="left:1268px;top:756.3px;color:#eee">0 %</div>
<div class="a" style="left:1045.5px;top:772px;width:52.5px;height:52.5px;border-radius:50%;background:#6e6e6e"></div>
<svg class="a" style="left:1078px;top:777px" width="16" height="16"><path d="M3.5 12.5 L13.5 2.5" stroke="#7aa0cc" stroke-width="1.2"/></svg>
<div class="t" style="left:1063px;top:793.5px;color:#f0f0f0">45 °</div>

<div class="a" style="left:1338px;top:565px;width:42px;height:304px;background:#4d4d4d"></div>
<div class="a" style="left:1380px;top:565px;width:16px;height:304px;background:#565656"></div>
<div class="a" style="left:1383.5px;top:566px;width:7px;height:28.5px;background:#a0a0a0;border-radius:3px"></div>
<svg class="a" style="left:1383px;top:858px" width="8" height="6"><path d="M0 0H8L4 6Z" fill="#9a9a9a"/></svg>
<div class="a" style="left:1338px;top:869px;width:58px;height:16px;background:#575757"></div>
<svg class="a" style="left:1369px;top:874px" width="6" height="8"><path d="M0 0V8L6 4Z" fill="#9a9a9a"/></svg>
<div class="a" style="left:1338px;top:885px;width:162px;height:22px;background:#505050"></div>
<div class="a" style="left:1396px;top:565px;width:4px;height:320px;background:#4a4a4a"></div>
<div class="a" style="left:1400px;top:565px;width:100px;height:157px;background:#474747"></div>
<div class="a" style="left:1400px;top:722px;width:100px;height:24px;background:#555"></div>
<div class="a" style="left:1404px;top:725px;width:18px;height:17px;background:#4b4b4b;border-radius:2px"></div>
<svg class="a" style="left:1406px;top:727px" width="14" height="14"><rect x="1" y="1" width="8" height="8" rx="1.5" fill="none" stroke="#aaa" stroke-width="1.1"/><path d="M4 10.5 H10.5 V4 M5.5 12.5 H12.5 V5.5" stroke="#aaa" stroke-width="1.1" fill="none"/></svg>
<div class="a" style="left:1400px;top:746px;width:100px;height:26px;background:#4d4d4d"></div>
<div class="t" style="left:1405px;top:753px;color:#999;font-size:9px;transform:none">||</div>
<div class="a" style="left:1416px;top:746px;width:50px;height:26px;background:#575757"></div>
<div class="t" style="left:1419.5px;top:752.5px;color:#eaeaea">Transform</div>
<div class="t" style="left:1470px;top:752.5px;color:#c4c4c4">Navigator</div>
<div class="a" style="left:1400px;top:772px;width:100px;height:113px;background:#575757"></div>
<div class="a" style="left:1417px;top:804px;width:26px;height:26px;background:#8a8a8a"></div>
<div class="a" style="left:1427.5px;top:802.5px;width:5px;height:5px;background:#d8d8d8"></div>
<div class="a" style="left:1440.5px;top:802.5px;width:5px;height:5px;background:#d8d8d8"></div>
<div class="a" style="left:1414.5px;top:815.5px;width:5px;height:5px;background:#d8d8d8"></div>
<div class="a" style="left:1427.5px;top:815.5px;width:5px;height:5px;background:#d8d8d8"></div>
<div class="a" style="left:1440.5px;top:815.5px;width:5px;height:5px;background:#d8d8d8"></div>
<div class="a" style="left:1414.5px;top:827.5px;width:5px;height:5px;background:#d8d8d8"></div>
<div class="a" style="left:1427.5px;top:827.5px;width:5px;height:5px;background:#d8d8d8"></div>
<div class="a" style="left:1440.5px;top:827.5px;width:5px;height:5px;background:#d8d8d8"></div>
<div class="a" style="left:1413px;top:801px;width:8px;height:8px;background:#fff"></div>
<div class="t" style="left:1460px;top:786px;color:#bbb">X:</div>
<div class="fld" style="left:1472px;top:782px;width:30px;height:18px"></div>
<div class="t" style="left:1477px;top:786px;color:#eee">167.5</div>
<div class="t" style="left:1460px;top:807px;color:#bbb">Y:</div>
<div class="fld" style="left:1472px;top:803px;width:30px;height:18px"></div>
<div class="t" style="left:1477px;top:807px;color:#eee">500 p</div>
<div class="t" style="left:1460px;top:833px;color:#bbb">R:</div>
<div class="fld" style="left:1472px;top:829px;width:30px;height:18px"></div>
<div class="t" style="left:1477px;top:833px;color:#eee">0 °</div>
<!-- ===== DIALOG ===== -->
<div class="a" style="left:788px;top:0;width:697px;height:565px;background:#5b5b5b"></div>
<div class="a" style="left:788px;top:0;width:697px;height:25px;background:#585858"></div>
<div class="t" style="left:1080px;top:7px;font-size:10px;line-height:11px;color:#f0f0f0;transform:none">Export Settings (38%)</div>
<svg class="a" style="left:1467px;top:7px" width="10" height="10"><path d="M1 1 L9 9 M9 1 L1 9" stroke="#e8e8e8" stroke-width="1.3"/></svg>
<!-- preview -->
<div class="a" style="left:795px;top:31px;width:334px;height:494px;background:#606060;border:1px dotted #2e2e2e"></div>
<div class="a" style="left:796px;top:112px;width:332px;height:334px;background:#ebebeb"></div>
<svg class="a" style="left:788px;top:0" width="350" height="530" viewBox="788 0 350 530">
<defs>
<linearGradient id="g2" gradientUnits="userSpaceOnUse" x1="462.9" y1="629.5" x2="661.8" y2="532.8">
<stop offset="0" stop-color="#fff"/><stop offset="0.2" stop-color="#ffdede"/><stop offset="0.38" stop-color="#f4a0a0"/><stop offset="0.58" stop-color="#f07a7a"/><stop offset="0.8" stop-color="#e9b8b8"/><stop offset="1" stop-color="#ebebeb"/>
</linearGradient>
<mask id="m2" maskUnits="userSpaceOnUse" x="0" y="0" width="788" height="909"><g font-family="Liberation Sans" font-size="144.5" fill="#fff">
<text transform="translate(0,606.6) scale(1,1.0412)" x="201.25 305.05 399.95 479.95 561.56" y="0">HELLO</text>
<text transform="translate(0,755.7) scale(1,1.0412)" x="202.96 337.46 448.65 551.75 632.15" y="0">WORLD</text>
</g></mask></defs>
<g transform="translate(751.3,33) scale(0.49)">
<g font-family="Liberation Sans" font-size="144.5" fill="#f00">
<text transform="translate(0,300) scale(1,1.0412)" x="201.25 305.05 399.95 479.95 561.56" y="0">HELLO</text>
<text transform="translate(0,448.6) scale(1,1.0412)" x="202.96 337.46 448.65 551.75 632.15" y="0">WORLD</text>
</g>
<rect x="180" y="480" width="580" height="300" fill="url(#g2)" mask="url(#m2)"/>
</g>
</svg>
<!-- right settings -->
<div class="dd" style="left:1136px;top:28px;width:131px;height:16px"></div>
<div class="t" style="left:1140px;top:31.5px;color:#eee">JPEG</div>
<div class="chev" style="left:1257px;top:32px"></div>
<div class="a" style="left:1136px;top:48px;width:334px;height:477px;background:#4e4e4e"></div>
<div class="a" style="left:1138px;top:50.5px;width:330px;height:187.5px;background:#575757"></div>
<div class="a" style="left:1138px;top:243px;width:330px;height:281px;background:#575757"></div>
<div class="chev" style="left:1142.5px;top:55px;border-color:#cfcfcf"></div>
<div class="t" style="left:1163px;top:55px;font-size:9.8px;color:#f6f6f6;transform:scaleX(0.9);-webkit-text-stroke:0.25px #f6f6f6">File Settings</div>
<div class="lb" style="left:1134px;width:100.5px;top:77.5px">Size:</div>
<div class="fld" style="left:1241px;top:73.5px;width:52px;height:17px"></div>
<div class="t" style="left:1247px;top:77.5px;color:#eee">1000 px</div>
<svg class="a" style="left:1297px;top:78px" width="18" height="8"><rect x="0.5" y="1" width="7" height="5.5" rx="2.5" fill="none" stroke="#8a8a8a" stroke-width="1.2"/><rect x="9.5" y="1" width="7" height="5.5" rx="2.5" fill="none" stroke="#8a8a8a" stroke-width="1.2"/><line x1="5" y1="3.8" x2="12" y2="3.8" stroke="#8a8a8a" stroke-width="1.2"/></svg>
<div class="fld" style="left:1319px;top:73.5px;width:53px;height:17px"></div>
<div class="t" style="left:1325px;top:77.5px;color:#eee">1000 px</div>
<div class="lb" style="left:1134px;width:100.5px;top:98px">Preset:</div>
<div class="dd" style="left:1241px;top:94.5px;width:148px;height:16px"></div>
<div class="t" style="left:1244px;top:98px;color:#eee">JPEG (Best quality)</div>
<div class="chev" style="left:1379px;top:98px"></div>
<div class="lb" style="left:1134px;width:100.5px;top:118px">Resample:</div>
<div class="dd" style="left:1241px;top:115px;width:181px;height:16px"></div>
<div class="t" style="left:1245px;top:118px;color:#eee">Bilinear</div>
<div class="chev" style="left:1412px;top:118px"></div>
<div class="lb" style="left:1134px;width:100.5px;top:138px">Quality:</div>
<div class="a" style="left:1239px;top:139.5px;width:126px;height:3px;background:#7aa0cc;border-radius:2px"></div>
<div class="a" style="left:1362px;top:135.5px;width:6px;height:10px;background:#e0e0e0;border-radius:1px 1px 3px 3px"></div>
<div class="a" style="left:1241px;top:149.5px;width:126px;height:2px;background-image:repeating-linear-gradient(90deg,#9a9a9a 0 1px,transparent 1px 6.2px)"></div>
<div class="fld" style="left:1374px;top:133.5px;width:45px;height:18px"></div>
<div class="t" style="left:1379px;top:137.5px;color:#eee">100</div>
<div class="lb" style="left:1134px;width:100.5px;top:191.5px">Area:</div>
<div class="dd" style="left:1241px;top:188.5px;width:166px;height:15px"></div>
<svg class="a" style="left:1245px;top:192px;color:#eeeeee" width="45" height="9.5" viewBox="0 0 45 9.5"><use href="#kata"/></svg>
<div class="chev" style="left:1396px;top:191.5px"></div>
<div class="cb" style="left:1241px;top:209px;width:10px;height:10px"></div>
<div class="t" style="left:1255px;top:209px;color:#c8c8c8">Don't export layers hidden by Export persona</div>
<div class="t" style="left:1153px;top:225px;color:#c4c4c4">Estimated File Size: 167.77 kB</div>
<div class="chev" style="left:1142.5px;top:247.5px;border-color:#cfcfcf"></div>
<div class="t" style="left:1163px;top:247.3px;font-size:9.8px;color:#f6f6f6;transform:scaleX(0.9);-webkit-text-stroke:0.25px #f6f6f6">Advanced</div>
<svg class="a" style="left:1450px;top:247px" width="9" height="9"><path d="M0 1.5H9M0 4.5H9M0 7.5H9" stroke="#9a9a9a" stroke-width="1.2"/></svg>
<div class="lb" style="left:1100px;width:106.5px;top:280px">Pixel format:</div>
<div class="dd" style="left:1213px;top:276.5px;width:130px;height:16px"></div>
<div class="t" style="left:1217px;top:280px;color:#eee">Use document format</div>
<div class="chev" style="left:1333px;top:280px"></div>
<div class="lb" style="left:1100px;width:106.5px;top:303.5px">Resample:</div>
<div class="dd" style="left:1213px;top:300.5px;width:130px;height:16px"></div>
<div class="t" style="left:1217px;top:303.5px;color:#eee">Bilinear</div>
<div class="chev" style="left:1333px;top:304px"></div>
<div class="lb" style="left:1100px;width:106.5px;top:328.5px">Matte:</div>
<div class="dd" style="left:1213px;top:323.5px;width:46px;height:19px;background:#5e5e5e"></div>
<div class="lb" style="left:1100px;width:106.5px;top:364.5px">ICC profile:</div>
<div class="dd" style="left:1213px;top:361.5px;width:130px;height:16px"></div>
<div class="chev" style="left:1333px;top:365px"></div>
<div class="cb" style="left:1213px;top:388px;width:10px;height:10px"></div>
<svg class="a" style="left:1214px;top:389px" width="9" height="9"><path d="M1.5 4.5 L3.5 6.8 L7.5 2" stroke="#eee" stroke-width="1.2" fill="none"/></svg>
<div class="t" style="left:1227px;top:388.5px;color:#cfcfcf">Embed ICC profiles</div>
<div class="cb" style="left:1153px;top:424px;width:10px;height:10px;background:#555"></div>
<div class="t" style="left:1167px;top:424.5px;color:#7e7e7e">Include bleed</div>
<div class="lb" style="left:1100px;width:106.5px;top:460px">Quality:</div>
<div class="fld" style="left:1213px;top:456.5px;width:65px;height:17.5px"></div>
<div class="t" style="left:1218px;top:460.5px;color:#eee">100</div>
<div class="chev" style="left:1268px;top:460px"></div>
<div class="cb" style="left:1153px;top:484.5px;width:10.5px;height:10.5px"></div>
<div class="t" style="left:1167.5px;top:485px;color:#d4d4d4">Progressive</div>
<div class="cb" style="left:1153px;top:509px;width:10.5px;height:10.5px"></div>
<div class="t" style="left:1167.5px;top:509.5px;color:#d4d4d4">Convert clips to paths</div>
<!-- scrollbar -->
<div class="a" style="left:1474.5px;top:48px;width:7px;height:434px;background:#a0a0a0;border-radius:3px"></div>
<svg class="a" style="left:1474px;top:514px" width="8" height="6"><path d="M0 0 H8 L4 6 Z" fill="#9a9a9a"/></svg>
<!-- buttons -->
<div class="btn" style="left:1341px;top:537px;width:64px;height:17px;background:#606060"></div>
<div class="t" style="left:1357px;top:541px;font-size:10px;color:#eee;transform:none">Export</div>
<div class="btn" style="left:1410px;top:537px;width:63px;height:17px;background:#606060"></div>
<div class="t" style="left:1426px;top:541px;font-size:10px;color:#eee;transform:none">Cancel</div>
<!-- right app panel strip -->
<div class="a" style="left:1485px;top:0;width:15px;height:565px;background:#474747"></div>
<div class="a" style="left:1486px;top:71px;width:14px;height:20px;background:#595959;border-radius:2px 0 0 2px"></div>
<svg class="a" style="left:1490px;top:73px" width="10" height="16"><path d="M1 6H10M1 10H10" stroke="#bbb" stroke-width="2"/><path d="M6 1V15" stroke="#3aa0e0" stroke-width="0.8" stroke-dasharray="1 1"/></svg>
<div class="a" style="left:1486px;top:91px;width:14px;height:27px;background:#414141"></div>
<div class="t" style="left:1488px;top:100px;color:#bbb">s</div>
<div class="t" style="left:1498px;top:100px;color:#3aa0e0">:</div>
<div class="a" style="left:1486px;top:118px;width:14px;height:197px;background:#535353"></div>
<svg class="a" style="left:1486px;top:150px" width="14" height="130" viewBox="1486 150 14 130">
<defs><linearGradient id="bl" gradientUnits="userSpaceOnUse" x1="1486" y1="192" x2="1500" y2="158"><stop offset="0" stop-color="#2a8cff"/><stop offset="1" stop-color="#0a14ff"/></linearGradient></defs>
<path d="M1489.4 194.3 A111.75 111.75 0 0 1 1508.9 149.0" stroke="url(#bl)" stroke-width="7.7" fill="none"/>
<path d="M1489.4 235.1 A111.75 111.75 0 0 0 1508.9 280.4" stroke="#00f060" stroke-width="7.7" fill="none"/>
</svg>
<div class="a" style="left:1486px;top:305.5px;width:14px;height:8.5px;background:repeating-conic-gradient(#c8c8c8 0 25%,#a8a8a8 0 50%) 0 0/6px 6px"></div>
<div class="a" style="left:1486px;top:315px;width:14px;height:37px;background:#434343"></div>
<div class="t" style="left:1487px;top:329px;color:#aaa">:</div>
<div class="t" style="left:1494px;top:329px;color:#ccc">C</div>
<div class="a" style="left:1486px;top:353px;width:4px;height:17px;background:#3e3e3e"></div>
<div class="a" style="left:1493px;top:353px;width:7px;height:17px;background:#585858;border-radius:2px 0 0 2px"></div>
<div class="t" style="left:1494.5px;top:356.5px;color:#dde">N</div>
<div class="a" style="left:1486px;top:371px;width:14px;height:36px;background:#4b5a69"></div>
<svg class="a" style="left:1486px;top:384.5px;color:#eeeeee" width="14" height="9.5" viewBox="31 0 14 9.5"><use href="#kata" x="0" y="0" width="45" height="9.5"/></svg>
<div class="a" style="left:1486px;top:407px;width:14px;height:27.5px;background:#555"></div>
<div class="t" style="left:1486px;top:416px;color:#9a9a9a">01W</div>
<div class="a" style="left:1486px;top:434.5px;width:14px;height:37.5px;background:#6a87a6"></div>
<div class="t" style="left:1486px;top:448px;color:#a8bcd0">01W</div>
<div class="a" style="left:1486px;top:472px;width:14px;height:28px;background:#555"></div>
<div class="t" style="left:1486px;top:485px;color:#9a9a9a">ngle</div>
<div class="a" style="left:1486px;top:500px;width:14px;height:65px;background:#474747"></div>
<!-- microphone popup -->
<div class="a" style="left:1375px;top:33px;width:125px;height:38.5px;background:#f0f0f0"></div>
<svg class="a" style="left:1383px;top:43px" width="16" height="17" viewBox="0 0 16 17">
<rect x="5" y="1" width="6" height="10" rx="3" fill="none" stroke="#1a1a1a" stroke-width="1.2"/>
<path d="M3 8 Q3 13 8 13 Q13 13 13 8 M8 13 V16 M5 16 H11" stroke="#1a1a1a" stroke-width="1.2" fill="none"/>
<path d="M1 1 L15 16" stroke="#1a1a1a" stroke-width="1.2"/>
</svg>
<div class="t" style="left:1408.5px;top:46.5px;font-size:11px;line-height:12px;color:#2c2c2c;transform:none">Microphone off</div>

<svg class="a" style="left:1090px;top:615px" width="265" height="85" viewBox="1090 615 265 85">
<g stroke="#00ee00" stroke-width="2.3" fill="none" stroke-linecap="round" stroke-linejoin="round">
<path d="M1100.2 640.1 Q1112 631 1124.5 629 Q1130 629 1135 634 Q1142 637 1150.5 637.5"/>
<ellipse cx="1167.5" cy="643.5" rx="7.6" ry="15" transform="rotate(14 1167.5 643.5)"/>
<path d="M1161.8 629 L1171 628"/>
<path d="M1184 625.5 Q1191 623 1196 625 Q1198 633 1193 635.5 Q1186 635.5 1183 630 Q1183 627 1185 626"/>
<path d="M1191.2 655.7 L1223.2 622.8"/>
<circle cx="1212.8" cy="652.3" r="2"/>
<ellipse cx="1245" cy="646.2" rx="5" ry="10.5" transform="rotate(-6 1245 646.2)"/>
<path d="M1265.7 643.6 L1258.8 677.4"/>
<path d="M1264 644.5 Q1271 643 1270.5 653 Q1269 661 1261.4 661"/>
<path d="M1278.7 644.5 Q1271 645 1270 656 Q1272 662 1276 661.8 Q1281 658 1282.2 646.2 Q1281 658 1285.6 666.1"/>
<path d="M1297.8 642.7 Q1289 645 1286 655 Q1286 661 1289 662 L1296 664.4"/>
<path d="M1304.7 649.7 L1303.8 675.7"/>
<path d="M1310.8 632.3 L1311.6 676.5"/>
<path d="M1307.5 651 L1315.5 649.5"/>
<path d="M1322.9 659.2 L1337.6 670.5"/>
<path d="M1345.4 658.3 Q1340 675 1331.6 692.1"/>
</g></svg>
</body></html>
